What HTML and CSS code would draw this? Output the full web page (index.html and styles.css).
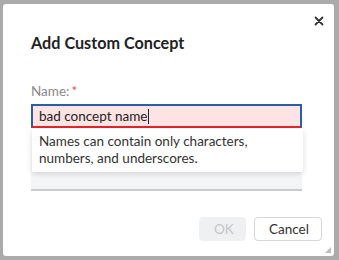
FILE: index.html
```html
<!DOCTYPE html>
<html lang="en">
<head>
  <meta charset="UTF-8">
  <title>Add Custom Concept</title>
  <link rel="stylesheet" href="styles.css">
</head>
<body>
  <div class="dialog">
    <button class="close" aria-label="Close">
      <svg width="10" height="10" viewBox="0 0 10 10"><path d="M1.5 1.5 L8.5 8.5 M8.5 1.5 L1.5 8.5" stroke="#333" stroke-width="1.8" stroke-linecap="round"/></svg>
    </button>
    <h2 class="title">Add Custom Concept</h2>

    <div class="field">
      <label class="label">Name:<span class="req">*</span></label>
      <div class="input-wrap">
        <div class="input">bad concept name<span class="caret"></span></div>
        <div class="popover">Names can contain only characters, numbers, and underscores.</div>
      </div>
      <div class="list"></div>
    </div>

    <div class="footer">
      <button class="btn btn-ok" disabled>OK</button>
      <button class="btn btn-cancel">Cancel</button>
    </div>
    <div class="grip"></div>
  </div>
</body>
</html>
```

FILE: styles.css
```css
body {
  margin: 0;
  background-color: #ababab; /* backdrop */
  font-family: 'Lato', 'Noto Sans', sans-serif;
  color: #333;
}

.dialog {
  position: relative;
  box-sizing: border-box;
  width: 331px;
  height: 252px;
  margin: 4px 0 0 3px;
  background-color: #fff;
  border-radius: 3px;
  padding: 27px 31px 0 28px;
  display: flex;
  flex-direction: column;
}

.close {
  position: absolute;
  top: 10px;
  right: 8px;
  width: 14px;
  height: 14px;
  padding: 0;
  border: none;
  background: none;
  display: flex;
  align-items: center;
  justify-content: center;
}

.title {
  margin: 0;
  font-size: 16.2px;
  font-weight: 700;
  color: #222;
  line-height: 24px;
}

.field {
  margin-top: 27px;
}

.label {
  display: block;
  font-size: 13.5px;
  color: #8a8a8a;
  line-height: 18px;
}

.req {
  color: #d9534f;
  margin-left: 2px;
}

.input-wrap {
  position: relative;
  margin-top: 4px;
}

.input {
  box-sizing: border-box;
  height: 24px;
  width: 271px;
  border: 2px solid #2a5ea8;
  border-bottom-color: #e3262b;
  background-color: #fde3e3;
  font-size: 13.5px;
  line-height: 20px;
  padding: 0 6px;
  color: #222;
}

.caret {
  display: inline-block;
  width: 1px;
  height: 15px;
  background: #222;
  vertical-align: -3px;
}

.popover {
  position: absolute;
  top: 25px;
  left: 1px;
  width: 271px;
  box-sizing: border-box;
  padding: 4px 8px 5px 7px;
  background-color: #fff;
  font-size: 13.5px;
  line-height: 17px;
  color: #333;
  box-shadow: 0 2px 6px rgba(0, 0, 0, 0.15);
  z-index: 2;
}

.list {
  height: 61px;
  width: 271px;
  background: linear-gradient(#fff, #f3f4f6);
  border-bottom: 2px solid #c8ccd2;
}

.footer {
  margin-top: auto;
  margin-bottom: 15px;
  display: flex;
  justify-content: flex-end;
  gap: 8px;
  margin-right: -19px;
}

.btn {
  height: 24px;
  border-radius: 4px;
  font-family: inherit;
  font-size: 13.5px;
  padding: 0 14px;
}

.btn-ok {
  width: 47px;
  border: 1px solid #eff0f2;
  background-color: #eff0f2;
  color: #c4c6ca;
}

.btn-cancel {
  width: 68px;
  border: 1px solid #d4d6da;
  background-color: #fff;
  color: #333;
}

.grip {
  position: absolute;
  right: 3px;
  bottom: 3px;
  width: 6px;
  height: 6px;
  background: radial-gradient(circle, #999 0.6px, transparent 0.9px) 0 0 / 2px 2px;
  clip-path: polygon(100% 0, 100% 100%, 0 100%);
}
```
